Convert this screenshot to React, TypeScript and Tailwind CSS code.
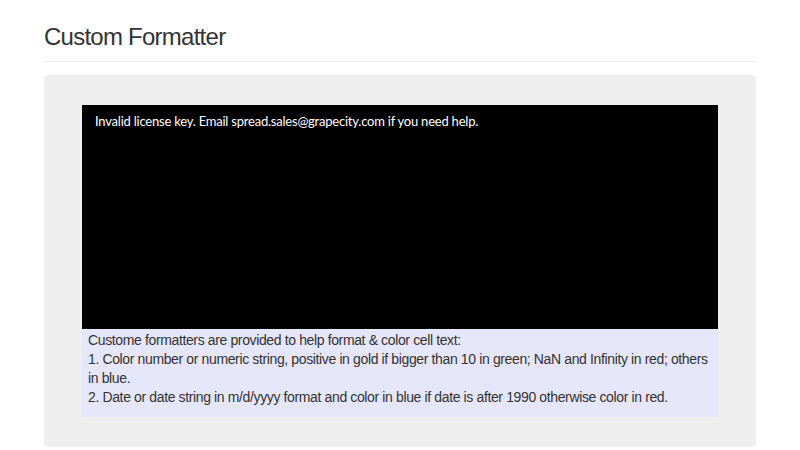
export default function App() {
  return (
    <div className="min-h-[450px] bg-white px-[44px] pt-[20px] font-['Liberation_Sans',Arial,sans-serif] text-[#333]">
      <h1 className="border-b border-[#eee] pb-[7px] text-[24px] leading-[34px] font-normal tracking-[-0.75px]">Custom Formatter</h1>
      <div className="mt-[13px] rounded-[4px] bg-[#eee] px-[38px] pt-[30px] pb-[30px]">
        <div className="h-[224px] bg-black px-[13px] pt-[7px] font-['Lato',sans-serif] text-[13px] tracking-[-0.22px] text-white">
          Invalid license key. Email spread.sales@grapecity.com if you need help.
        </div>
        <div className="bg-[#e6e6fa] px-[6px] pt-[2px] pb-[10px] text-[14px] leading-[19px] tracking-[-0.37px]">
          <div>Custome formatters are provided to help format &amp; color cell text:</div>
          <div>1. Color number or numeric string, positive in gold if bigger than 10 in green; NaN and Infinity in red; others in blue.</div>
          <div>2. Date or date string in m/d/yyyy format and color in blue if date is after 1990 otherwise color in red.</div>
        </div>
      </div>
    </div>
  )
}
